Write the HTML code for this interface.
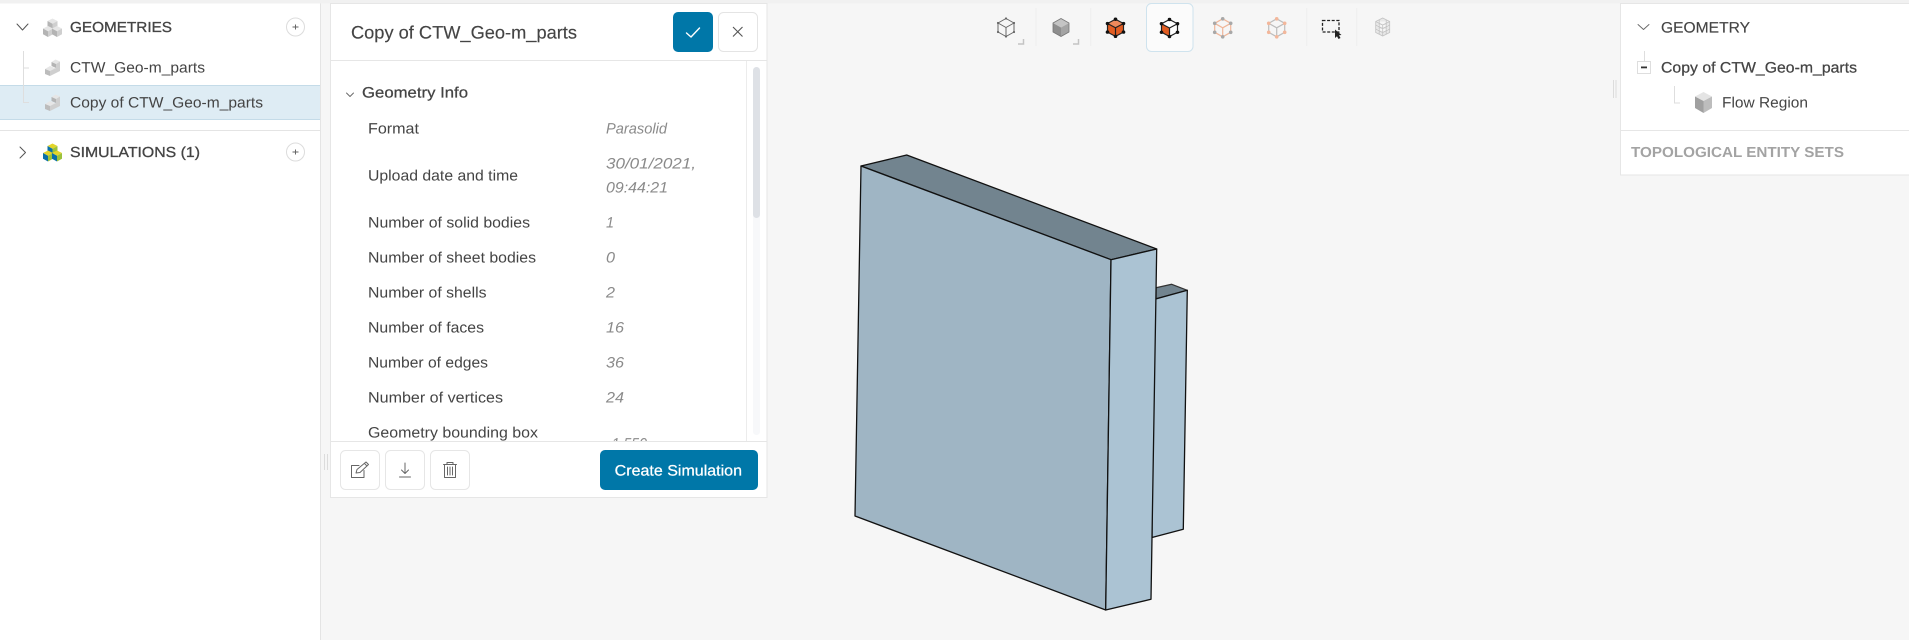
<!DOCTYPE html>
<html>
<head>
<meta charset="utf-8">
<title>Geometry</title>
<style>
html,body{margin:0;padding:0;background:#f6f6f6;width:1909px;height:640px;overflow:hidden}
svg{display:block}
text{font-family:"Liberation Sans",Arial,sans-serif;fill:#444}
.h{font-size:14.5px;stroke:#444;stroke-width:.3px}
.b{font-size:15px}
.m{font-size:15px;stroke:#444;stroke-width:.25px}
.v{font-size:15px;font-style:italic;fill:#8a8a8a}
.l{fill:none;stroke-linecap:round;stroke-linejoin:round}
</style>
</head>
<body>
<svg width="1909" height="640" viewBox="0 0 1909 640" xmlns="http://www.w3.org/2000/svg" text-rendering="geometricPrecision">
<defs>
<clipPath id="c1"><rect x="331" y="61" width="415" height="380"/></clipPath>
<g id="gc">
<polygon points="0,-5.5 5,-3 0,-.3 -5,-3" fill="#e6e6e6"/>
<polygon points="-5,-3 0,-.3 0,5.5 -5,2.8" fill="#b4b4b4"/>
<polygon points="5,-3 0,-.3 0,5.5 5,2.8" fill="#cfcfcf"/>
</g>
<g id="sc">
<polygon points="0,-5.5 5,-3 0,-.3 -5,-3" fill="#e2d52a"/>
<polygon points="-5,-3 0,-.3 0,5.5 -5,2.8" fill="#0a6fa8"/>
<polygon points="5,-3 0,-.3 0,5.5 5,2.8" fill="#9cc23c"/>
</g>
<g id="item">
<polygon points="51.500,62 55.500,59.500 60,61.500 56,64" fill="#e6e6e6"/>
<polygon points="51.500,62 56,64 56,68 51.500,66" fill="#b4b4b4"/>
<polygon points="45,69 50,66 56,68.500 50,71" fill="#e6e6e6"/>
<polygon points="45,69 50,71 50,76 45,74" fill="#bcbcbc"/>
<polygon points="50,71 56,68 56,64 60,61.500 60,71 50,76" fill="#cfcfcf"/>
</g>
</defs>

<rect width="1909" height="640" fill="#f6f6f6"/>
<rect x="0" y="0" width="1909" height="3.5" fill="#f1f1f1"/>

<!-- model -->
<g stroke="#111" stroke-width="1.300" stroke-linejoin="round">
<polygon points="1156,287.700 1171.700,284.300 1187.300,290.300 1156,298.700" fill="#72848f" stroke="#333"/>
<polygon points="1152,300 1187.300,290.300 1183.300,529.300 1152,537.500" fill="#abc3d3"/>
<polygon points="861,166 906.700,155 1156.700,249 1111,259.700" fill="#72848f"/>
<polygon points="861,166 1111,259.700 1105.700,610 855,516" fill="#9fb5c4"/>
<polygon points="1111,259.700 1156.700,249 1151,599.300 1105.700,610" fill="#abc3d3"/>
</g>

<!-- left panel -->
<rect x="0" y="3.500" width="320" height="637" fill="#fff"/>
<rect x="320" y="3.500" width="1" height="637" fill="#e4e4e4"/>
<rect x="0" y="85" width="320" height="35" fill="#deecf4"/>
<rect x="0" y="85" width="320" height="1" fill="#c4dbe8"/>
<rect x="0" y="119" width="320" height="1" fill="#c4dbe8"/>
<rect x="0" y="130" width="320" height="1" fill="#e4e4e4"/>
<path class="l" d="M17 24 L22.500 30 L28 24" stroke="#555" stroke-width="1"/>
<path class="l" d="M20 147 L25.500 152.500 L20 158" stroke="#555" stroke-width="1"/>
<use href="#gc" x="52.500" y="24"/><use href="#gc" x="48" y="31.500"/><use href="#gc" x="57" y="31.500"/>
<text class="h" x="70" y="32" textLength="102" lengthAdjust="spacingAndGlyphs">GEOMETRIES</text>
<circle cx="295.500" cy="27" r="9" fill="#fff" stroke="#dcdcdc"/>
<path d="M292.500 27H298.500M295.500 24.500V29.500" stroke="#666" stroke-width="1"/>
<path d="M23.500 51V102.500H29M23.500 68H29" fill="none" stroke="#dedede"/>
<use href="#item"/><use href="#item" y="35"/>
<text class="b" x="70" y="72.500" textLength="135" lengthAdjust="spacingAndGlyphs">CTW_Geo-m_parts</text>
<text class="b" x="70" y="107.500" textLength="193" lengthAdjust="spacingAndGlyphs">Copy of CTW_Geo-m_parts</text>
<use href="#sc" x="52.500" y="149"/><use href="#sc" x="48" y="156"/><use href="#sc" x="57" y="156"/>
<text class="h" x="70" y="157" textLength="130" lengthAdjust="spacingAndGlyphs">SIMULATIONS (1)</text>
<circle cx="295.500" cy="152" r="9" fill="#fff" stroke="#dcdcdc"/>
<path d="M292.500 152H298.500M295.500 149.500V154.500" stroke="#666" stroke-width="1"/>

<!-- grip -->
<path d="M324.500 454V470M327.500 454V470" stroke="#dcdcdc"/>

<!-- info panel -->
<rect x="330.500" y="3.500" width="436.500" height="494" fill="#fff" stroke="#e6e6e6"/>
<rect x="331" y="60" width="435.500" height="1" fill="#e6e6e6"/>
<text x="351" y="38.500" font-size="18" textLength="226" lengthAdjust="spacingAndGlyphs" stroke="#444" stroke-width=".15">Copy of CTW_Geo-m_parts</text>
<rect x="673" y="12" width="40" height="40" rx="5" fill="#0077a8"/>
<path class="l" d="M686.500 33 L691 37 L699.500 28" stroke="#fff" stroke-width="1.400"/>
<rect x="718.500" y="12.500" width="39" height="39" rx="5" fill="#fff" stroke="#e4e4e4"/>
<path d="M733 27 L742.500 36.500 M742.500 27 L733 36.500" stroke="#555" stroke-width="1.100"/>
<rect x="746" y="61" width="1" height="380" fill="#ececec"/>
<rect x="753" y="67" width="7" height="368" rx="3.500" fill="#f7f8fa"/>
<rect x="753" y="67" width="7" height="151" rx="3.500" fill="#dee1e6"/>
<path class="l" d="M346.500 93 L350 96.500 L353.500 93" stroke="#666" stroke-width=".9"/>
<text class="m" x="362" y="97.500" textLength="106" lengthAdjust="spacingAndGlyphs">Geometry Info</text>

<g clip-path="url(#c1)">
<g transform="translate(0 -.6)">
<text class="b" x="368" y="134" textLength="51" lengthAdjust="spacingAndGlyphs">Format</text>
<text class="v" x="606" y="134" textLength="61" lengthAdjust="spacingAndGlyphs">Parasolid</text>
<text class="b" x="368" y="181" textLength="150" lengthAdjust="spacingAndGlyphs">Upload date and time</text>
<text class="v" x="606" y="169" textLength="90" lengthAdjust="spacingAndGlyphs">30/01/2021,</text>
<text class="v" x="606" y="193" textLength="62" lengthAdjust="spacingAndGlyphs">09:44:21</text>
<text class="b" x="368" y="228" textLength="162" lengthAdjust="spacingAndGlyphs">Number of solid bodies</text>
<text class="v" x="606" y="228" textLength="8" lengthAdjust="spacingAndGlyphs">1</text>
<text class="b" x="368" y="263" textLength="168" lengthAdjust="spacingAndGlyphs">Number of sheet bodies</text>
<text class="v" x="606" y="263" textLength="9" lengthAdjust="spacingAndGlyphs">0</text>
<text class="b" x="368" y="298" textLength="118.500" lengthAdjust="spacingAndGlyphs">Number of shells</text>
<text class="v" x="606" y="298" textLength="9" lengthAdjust="spacingAndGlyphs">2</text>
<text class="b" x="368" y="333" textLength="116" lengthAdjust="spacingAndGlyphs">Number of faces</text>
<text class="v" x="606" y="333" textLength="18" lengthAdjust="spacingAndGlyphs">16</text>
<text class="b" x="368" y="368" textLength="120" lengthAdjust="spacingAndGlyphs">Number of edges</text>
<text class="v" x="606" y="368" textLength="18" lengthAdjust="spacingAndGlyphs">36</text>
<text class="b" x="368" y="403" textLength="135" lengthAdjust="spacingAndGlyphs">Number of vertices</text>
<text class="v" x="606" y="403" textLength="18" lengthAdjust="spacingAndGlyphs">24</text>
<text class="b" x="368" y="438" textLength="170" lengthAdjust="spacingAndGlyphs">Geometry bounding box</text>
<text class="v" x="607" y="449" textLength="40" lengthAdjust="spacingAndGlyphs">-1.550</text>
</g>
</g>

<rect x="331" y="441" width="435.500" height="1" fill="#e6e6e6"/>
<rect x="340.500" y="450.500" width="39" height="39" rx="5" fill="#fff" stroke="#e6e6e6"/>
<rect x="385.500" y="450.500" width="39" height="39" rx="5" fill="#fff" stroke="#e6e6e6"/>
<rect x="430.500" y="450.500" width="39" height="39" rx="5" fill="#fff" stroke="#e6e6e6"/>
<path class="l" d="M364 470.500V477.500H351.500V465.500H359" stroke="#666" stroke-width="1"/>
<path class="l" d="M356 473L357 469.500L366 462L368.500 464.500L360 472.500Z M364.500 463.500L367 466" stroke="#666" stroke-width="1"/>
<path class="l" d="M405 463V473M401.500 470L405 473.500L408.500 470M399.500 477H410.500" stroke="#666" stroke-width="1"/>
<path class="l" d="M443.500 464.500H456.500M447 464.500V462.500H453V464.500M444.500 464.500V477.500H455.500V464.500M447.500 467V475M450 467V475M452.500 467V475" stroke="#666" stroke-width="1"/>
<rect x="600" y="450" width="158" height="40" rx="5" fill="#0077a8"/>
<text x="614.700" y="475.500" font-size="15" textLength="127.300" lengthAdjust="spacingAndGlyphs" style="fill:#fff;stroke:#fff;stroke-width:.25px">Create Simulation</text>

<!-- toolbar -->
<rect x="1146.500" y="3.500" width="46.500" height="48" rx="5" fill="#fbfbfb" stroke="#cfe3ee"/>
<path d="M1036 8V46M1090.700 8V46M1306.700 8V46M1356.700 8V46" stroke="#efefef"/>

<g transform="translate(1006 27.500)">
<path class="l" d="M0-9 8-4.500V4.500L0 9-8 4.500V-4.500ZM-8-4.500 0 0 8-4.500M0 0V9" stroke="#666" stroke-width="1"/>
<g fill="#666"><circle cx="0" cy="-9" r="1.100"/><circle cx="8" cy="-4.500" r="1.100"/><circle cx="8" cy="4.500" r="1.100"/><circle cx="0" cy="9" r="1.100"/><circle cx="-8" cy="4.500" r="1.100"/><circle cx="-8" cy="-4.500" r="1.100"/></g>
</g>
<path d="M1023.500 39V44H1018" fill="none" stroke="#c4c4c4" stroke-width="1.500"/>

<g transform="translate(1061 27.500)">
<polygon points="0,-9 8,-4.500 0,0 -8,-4.500" fill="#c4c4c4"/>
<polygon points="-8,-4.500 0,0 0,9 -8,4.500" fill="#8e8e8e"/>
<polygon points="8,-4.500 0,0 0,9 8,4.500" fill="#a4a4a4"/>
<path class="l" d="M0-9 8-4.500V4.500L0 9-8 4.500V-4.500Z" stroke="#777" stroke-width=".8"/>
</g>
<path d="M1078.500 39V44H1073" fill="none" stroke="#c4c4c4" stroke-width="1.500"/>

<g transform="translate(1115.500 27.800) scale(1 .95)">
<polygon points="0,-9 8,-4.500 0,0 -8,-4.500" fill="#ef8a5c"/>
<polygon points="-8,-4.500 0,0 0,9 -8,4.500" fill="#e25d22"/>
<polygon points="8,-4.500 0,0 0,9 8,4.500" fill="#e25d22"/>
<path class="l" d="M0-9 8-4.500V4.500L0 9-8 4.500V-4.500ZM-8-4.500 0 0 8-4.500M0 0V9" stroke="#222" stroke-width="1.200"/>
<g fill="#111"><circle cx="0" cy="-9" r="1.800"/><circle cx="8" cy="-4.500" r="1.800"/><circle cx="8" cy="4.500" r="1.800"/><circle cx="0" cy="9" r="1.800"/><circle cx="-8" cy="4.500" r="1.800"/><circle cx="-8" cy="-4.500" r="1.800"/></g>
</g>

<g transform="translate(1169.500 28) scale(1 .95)">
<polygon points="0,-9 8,-4.500 0,0 -8,-4.500" fill="#fff"/>
<polygon points="-8,-4.500 0,0 0,9 -8,4.500" fill="#e25d22"/>
<polygon points="8,-4.500 0,0 0,9 8,4.500" fill="#fff"/>
<path class="l" d="M0-9 8-4.500V4.500L0 9-8 4.500V-4.500ZM-8-4.500 0 0 8-4.500M0 0V9" stroke="#222" stroke-width="1.200"/>
<g fill="#111"><circle cx="0" cy="-9" r="1.800"/><circle cx="8" cy="-4.500" r="1.800"/><circle cx="8" cy="4.500" r="1.800"/><circle cx="0" cy="9" r="1.800"/><circle cx="-8" cy="4.500" r="1.800"/><circle cx="-8" cy="-4.500" r="1.800"/></g>
</g>

<g transform="translate(1222.700 27.800)">
<path class="l" d="M0-9 8-4.500V4.500L0 9-8 4.500V-4.500ZM-8-4.500 0 0 8-4.500M0 0V9" stroke="#f0b699" stroke-width="1.200"/>
<g fill="#a8a8a8"><circle cx="0" cy="-9" r="1.800"/><circle cx="8" cy="-4.500" r="1.800"/><circle cx="8" cy="4.500" r="1.800"/><circle cx="0" cy="9" r="1.800"/><circle cx="-8" cy="4.500" r="1.800"/><circle cx="-8" cy="-4.500" r="1.800"/></g>
</g>

<g transform="translate(1276.700 27.800)">
<path class="l" d="M0-9 8-4.500V4.500L0 9-8 4.500V-4.500ZM-8-4.500 0 0 8-4.500M0 0V9" stroke="#bdbdbd" stroke-width="1.200"/>
<g fill="#f3b79b"><circle cx="0" cy="-9" r="1.800"/><circle cx="8" cy="-4.500" r="1.800"/><circle cx="8" cy="4.500" r="1.800"/><circle cx="0" cy="9" r="1.800"/><circle cx="-8" cy="4.500" r="1.800"/><circle cx="-8" cy="-4.500" r="1.800"/></g>
</g>

<rect x="1322.500" y="20.500" width="16.500" height="11.500" fill="none" stroke="#222" stroke-width="1.300" stroke-dasharray="3 1.600"/>
<polygon points="1335,29.500 1335,38 1337,36.200 1338.500,39 1340.500,38 1339,35.200 1341.500,35" fill="#222"/>

<g transform="translate(1382.700 27)" opacity=".55">
<path d="M0-9 7-5.500V5.500L0 9-7 5.500V-5.500ZM-7-5.500 0-2 7-5.500M0-2V9M-7-2 0 1.500 7-2M-7 2 0 5.500 7 2M-3.500-7.300V7.300M3.500-7.300V7.300" fill="#ddd" stroke="#999" stroke-width=".8"/>
</g>

<!-- right panel -->
<path d="M1613.500 80V98M1616 80V98" stroke="#dcdcdc"/>
<rect x="1620.500" y="3.500" width="300" height="171.500" fill="#fff" stroke="#e6e6e6"/>
<rect x="1621" y="130" width="288" height="1" fill="#e6e6e6"/>
<path class="l" d="M1638 24.500 L1643.500 29.500 L1649 24.500" stroke="#666" stroke-width=".9"/>
<text class="b" x="1661" y="32.500" textLength="89" lengthAdjust="spacingAndGlyphs" stroke="#444" stroke-width=".15">GEOMETRY</text>
<path d="M1644.500 51V61" stroke="#dedede"/>
<rect x="1637.500" y="61.500" width="13" height="12" fill="#fff" stroke="#dedede"/>
<rect x="1641" y="66.500" width="6" height="1.800" fill="#333"/>
<text class="m" x="1661" y="72.500" textLength="196" lengthAdjust="spacingAndGlyphs">Copy of CTW_Geo-m_parts</text>
<path d="M1674.500 86V103H1680" fill="none" stroke="#dedede"/>
<polygon points="1703.500,92 1712,96.500 1703.500,101 1695,96.500" fill="#e4e4e4"/>
<polygon points="1695,96.500 1703.500,101 1703.500,113 1695,108" fill="#a0a0a0"/>
<polygon points="1712,96.500 1703.500,101 1703.500,113 1712,108" fill="#bdbdbd"/>
<text class="b" x="1722" y="107.500" textLength="86" lengthAdjust="spacingAndGlyphs">Flow Region</text>
<text x="1631" y="157" font-size="14.500" font-weight="700" textLength="213" lengthAdjust="spacingAndGlyphs" style="fill:#a3a3a3">TOPOLOGICAL ENTITY SETS</text>
</svg>
</body>
</html>
